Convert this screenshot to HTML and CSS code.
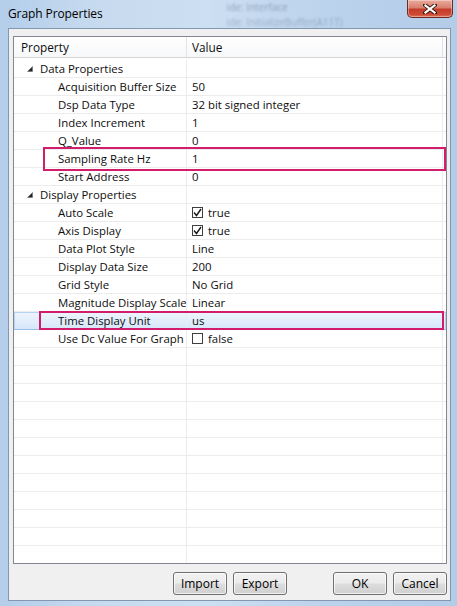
FILE: index.html
```html
<!DOCTYPE html>
<html>
<head>
<meta charset="utf-8">
<link rel="stylesheet" href="styles.css">
</head>
<body>
<div class="window">
  <div class="titlebar">
    <span class="title">Graph Properties</span>
    <div class="glass">
      <span class="blur b1">ide: Interface</span>
      <span class="blur b2">ide: InitializeBuffer(A11T)</span>
    </div>
    <div class="close">
      <svg width="14" height="10" viewBox="0 0 14 10"><path d="M2 1 L12 9 M12 1 L2 9" stroke="#3a1a14" stroke-width="4" stroke-linecap="square"/><path d="M2.5 1.5 L11.5 8.5 M11.5 1.5 L2.5 8.5" stroke="#fff" stroke-width="2.2" stroke-linecap="square"/></svg>
    </div>
  </div>
  <div class="client">
    <div class="grid">
      <div class="row head">
        <div class="c1">Property</div><div class="c2">Value</div><div class="c3"></div>
      </div>
      <div class="body">
        <div class="row"><div class="c1 cat"><svg class="tri" width="6" height="6" viewBox="0 0 6 6"><polygon points="5.5,0.5 5.5,5.5 0.5,5.5" fill="#262626" stroke="#6b6b6b" stroke-width="0.6"/></svg>Data Properties</div><div class="c2"></div><div class="c3"></div></div>
        <div class="row"><div class="c1 item">Acquisition Buffer Size</div><div class="c2">50</div><div class="c3"></div></div>
        <div class="row"><div class="c1 item">Dsp Data Type</div><div class="c2">32 bit signed integer</div><div class="c3"></div></div>
        <div class="row"><div class="c1 item">Index Increment</div><div class="c2">1</div><div class="c3"></div></div>
        <div class="row"><div class="c1 item">Q_Value</div><div class="c2">0</div><div class="c3"></div></div>
        <div class="row mark-a"><div class="c1 item">Sampling Rate Hz</div><div class="c2">1</div><div class="c3"></div></div>
        <div class="row"><div class="c1 item">Start Address</div><div class="c2">0</div><div class="c3"></div></div>
        <div class="row"><div class="c1 cat"><svg class="tri" width="6" height="6" viewBox="0 0 6 6"><polygon points="5.5,0.5 5.5,5.5 0.5,5.5" fill="#262626" stroke="#6b6b6b" stroke-width="0.6"/></svg>Display Properties</div><div class="c2"></div><div class="c3"></div></div>
        <div class="row"><div class="c1 item">Auto Scale</div><div class="c2"><span class="cb"><svg width="9" height="9" viewBox="0 0 9 9"><path d="M1 4.5 L3.5 7.5 L8 1" fill="none" stroke="#1a1a1a" stroke-width="1.4"/></svg></span>true</div><div class="c3"></div></div>
        <div class="row"><div class="c1 item">Axis Display</div><div class="c2"><span class="cb"><svg width="9" height="9" viewBox="0 0 9 9"><path d="M1 4.5 L3.5 7.5 L8 1" fill="none" stroke="#1a1a1a" stroke-width="1.4"/></svg></span>true</div><div class="c3"></div></div>
        <div class="row"><div class="c1 item">Data Plot Style</div><div class="c2">Line</div><div class="c3"></div></div>
        <div class="row"><div class="c1 item">Display Data Size</div><div class="c2">200</div><div class="c3"></div></div>
        <div class="row"><div class="c1 item">Grid Style</div><div class="c2">No Grid</div><div class="c3"></div></div>
        <div class="row"><div class="c1 item">Magnitude Display Scale</div><div class="c2">Linear</div><div class="c3"></div></div>
        <div class="row selected mark-b"><div class="c1 item">Time Display Unit</div><div class="c2">us</div><div class="c3"></div></div>
        <div class="row"><div class="c1 item">Use Dc Value For Graph</div><div class="c2"><span class="cb"></span>false</div><div class="c3"></div></div>
        <div class="row"><div class="c1"></div><div class="c2"></div><div class="c3"></div></div>
        <div class="row"><div class="c1"></div><div class="c2"></div><div class="c3"></div></div>
        <div class="row"><div class="c1"></div><div class="c2"></div><div class="c3"></div></div>
        <div class="row"><div class="c1"></div><div class="c2"></div><div class="c3"></div></div>
        <div class="row"><div class="c1"></div><div class="c2"></div><div class="c3"></div></div>
        <div class="row"><div class="c1"></div><div class="c2"></div><div class="c3"></div></div>
        <div class="row"><div class="c1"></div><div class="c2"></div><div class="c3"></div></div>
        <div class="row"><div class="c1"></div><div class="c2"></div><div class="c3"></div></div>
        <div class="row"><div class="c1"></div><div class="c2"></div><div class="c3"></div></div>
        <div class="row"><div class="c1"></div><div class="c2"></div><div class="c3"></div></div>
        <div class="row"><div class="c1"></div><div class="c2"></div><div class="c3"></div></div>
        <div class="row"><div class="c1"></div><div class="c2"></div><div class="c3"></div></div>
      </div>
    </div>
    <div class="buttons">
      <button class="btn">Import</button>
      <button class="btn">Export</button>
      <button class="btn gap">OK</button>
      <button class="btn">Cancel</button>
    </div>
  </div>
</div>
</body>
</html>
```
FILE: styles.css
```css
html, body {
  margin: 0;
  padding: 0;
}
body {
  width: 457px;
  height: 606px;
  overflow: hidden;
  font-family: "Open Sans", "Noto Sans", sans-serif;
  font-size: 11.4px;
  color: #0d0d0d;
}
.window {
  width: 457px;
  height: 606px;
  box-sizing: border-box;
  padding: 0 6px 5px 8px;
  display: flex;
  flex-direction: column;
  background: linear-gradient(90deg, #b3cdea 0%, #c6daef 20%, #cddff2 45%, #bcd3ec 70%, #b3cce8 100%);
}
.titlebar {
  height: 28px;
  display: flex;
  align-items: flex-start;
  margin-right: -2px;
}
.title {
  font-size: 12px;
  line-height: 28px;
  color: #000;
  letter-spacing: -0.1px;
}
.glass {
  margin-left: 124px;
  display: flex;
  flex-direction: column;
  gap: 4px;
  padding-top: 2px;
}
.blur {
  font-size: 10px;
  line-height: 11px;
  color: #4b5d78;
  opacity: 0.45;
  filter: blur(1.3px);
  white-space: nowrap;
}
.b2 { opacity: 0.35; }
.close {
  margin-left: auto;
  width: 46px;
  height: 18px;
  box-sizing: border-box;
  border: 1px solid #6d2a22;
  border-top: none;
  border-radius: 0 0 5px 5px;
  background: linear-gradient(#e9aa9c 0%, #d9806f 45%, #c23d2a 55%, #cf4a35 85%, #e0735a 100%);
  display: flex;
  align-items: center;
  justify-content: center;
  box-shadow: inset 0 0 0 1px rgba(255,255,255,0.35);
}
.close svg { display: block; }
.client {
  flex: 1;
  background: #f0f0f0;
  border: 1px solid #8497b0;
  padding: 7px 3px 0 4px;
  display: flex;
  flex-direction: column;
}
.grid {
  height: 528px;
  box-sizing: border-box;
  border: 1px solid #828790;
  background: #fff;
  display: flex;
  flex-direction: column;
  overflow: hidden;
}
.row {
  display: grid;
  grid-template-columns: 173px 256px 1fr;
  height: 18px;
  box-sizing: border-box;
  border-bottom: 1px solid #ececec;
  flex: none;
}
.row > div {
  box-sizing: border-box;
  border-right: 1px solid #ececec;
  white-space: nowrap;
  overflow: hidden;
  line-height: 17px;
  display: flex;
  align-items: center;
}
.row > .c3 { border-right: none; }
.head {
  height: 21px;
  border-bottom: 1px solid #d5d5d5;
  background: linear-gradient(#ffffff, #f7f8fa);
}
.head > div {
  line-height: 20px;
  font-size: 11.8px;
  border-right-color: #e3e3e3;
}
.head .c1 { padding-left: 7px; }
.head .c2 { padding-left: 5px; }
.body {
  padding-top: 2px;
  flex: 1;
  overflow: hidden;
}
.cat { padding-left: 13px; }
.tri { margin-right: 7px; flex: none; }
.item { padding-left: 44px; }
.c2 { padding-left: 5px; }
.cb {
  width: 11px;
  height: 11px;
  box-sizing: border-box;
  border: 1px solid #3f3f3f;
  background: #fff;
  margin-right: 5px;
  display: inline-flex;
  align-items: center;
  justify-content: center;
  flex: none;
}
.cb svg { display: block; }
.selected {
  background: linear-gradient(#eef5fd, #d6e7fa);
  box-shadow: inset 1px 1px 0 #b8d3f2, inset -1px 0 0 #b8d3f2;
  border-bottom-color: #9dc0ea;
}
.mark-a, .mark-b { position: relative; }
.mark-a::after, .mark-b::after {
  content: "";
  position: absolute;
  border: 2px solid #d21c6c;
  box-sizing: border-box;
  pointer-events: none;
}
.mark-a::after {
  left: 29px;
  right: 0;
  top: -3px;
  height: 24px;
}
.mark-b::after {
  left: 25px;
  right: 2px;
  top: -1px;
  height: 19px;
}
.buttons {
  display: flex;
  justify-content: flex-end;
  gap: 6px;
  padding-top: 8px;
}
.btn {
  width: 54px;
  height: 23px;
  padding: 0;
  font-family: "Open Sans", "Noto Sans", sans-serif;
  font-size: 12px;
  color: #000;
  border: 1px solid #707070;
  border-radius: 3px;
  background: linear-gradient(#f2f2f2 0%, #ebebeb 48%, #dddddd 52%, #cfcfcf 100%);
  box-shadow: inset 0 0 0 1px rgba(255,255,255,0.7);
}
.btn.gap { margin-left: 40px; }
```
